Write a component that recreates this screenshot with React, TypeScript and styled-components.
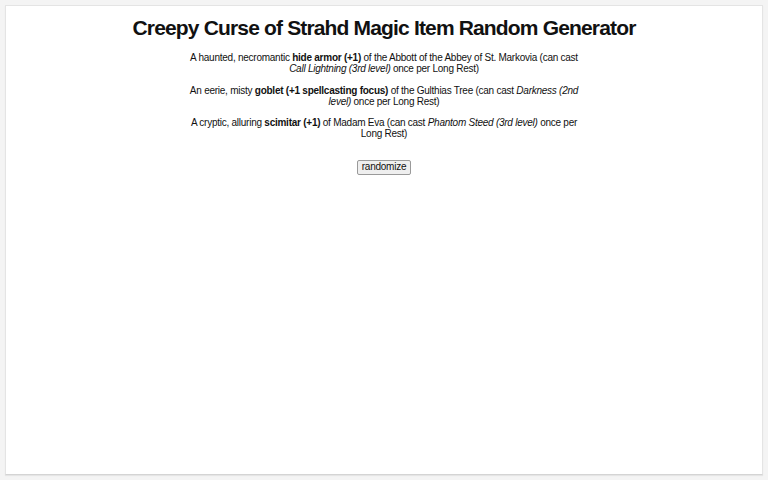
import { createGlobalStyle } from 'styled-components'
import styled from 'styled-components'

interface Item {
  adjectives: string
  article: string
  name: string
  owner: string
  spell: string
}

const ITEMS: Item[] = [
  {
    article: 'A',
    adjectives: 'haunted, necromantic',
    name: 'hide armor (+1)',
    owner: 'the Abbott of the Abbey of St. Markovia',
    spell: 'Call Lightning (3rd level)',
  },
  {
    article: 'An',
    adjectives: 'eerie, misty',
    name: 'goblet (+1 spellcasting focus)',
    owner: 'the Gulthias Tree',
    spell: 'Darkness (2nd level)',
  },
  {
    article: 'A',
    adjectives: 'cryptic, alluring',
    name: 'scimitar (+1)',
    owner: 'Madam Eva',
    spell: 'Phantom Steed (3rd level)',
  },
]

const GlobalStyle = createGlobalStyle`
  html, body {
    height: 100%;
  }

  body {
    margin: 0;
    padding: 5px;
    box-sizing: border-box;
    background: #f4f4f4;
    font-family: "Liberation Sans", Arial, sans-serif;
    color: #000;
  }

  #root {
    height: 100%;
  }
`

const App = () => {
  return (
    <>
      <GlobalStyle />
      <Card>
        <Title>Creepy Curse of Strahd Magic Item Random Generator</Title>
        <ItemList>
          {ITEMS.map((item) => (
            <ItemText key={item.name}>
              {item.article} {item.adjectives} <b>{item.name}</b> of {item.owner} (can cast{' '}
              <i>{item.spell}</i> once per Long Rest)
            </ItemText>
          ))}
        </ItemList>
        <ButtonRow>
          <RandomizeButton type="button">randomize</RandomizeButton>
        </ButtonRow>
      </Card>
    </>
  )
}

export default App

const Card = styled.div`
  height: 100%;
  box-sizing: border-box;
  background: #fff;
  border: 1px solid #e4e4e4;
  border-bottom-color: #d4d4d4;
  box-shadow: 0 1px 1px rgba(0, 0, 0, 0.06);
  padding-top: 10px;
  display: flex;
  flex-direction: column;
  align-items: center;
`

const Title = styled.h1`
  margin: 0;
  font-size: 21px;
  font-weight: bold;
  line-height: 24px;
  letter-spacing: -0.84px;
  color: #111;
`

const ItemList = styled.div`
  width: 400px;
  margin-top: 12px;
  display: flex;
  flex-direction: column;
  gap: 10.5px;
`

const ItemText = styled.p`
  margin: 0;
  font-size: 10px;
  line-height: 11px;
  letter-spacing: -0.25px;
  text-align: center;
  color: #111;
`

const ButtonRow = styled.div`
  margin-top: 17px;
`

const RandomizeButton = styled.button`
  font-family: "Liberation Sans", Arial, sans-serif;
  font-size: 10px;
  letter-spacing: -0.25px;
  line-height: 12px;
  padding: 0 4px;
  height: 15px;
  color: #111;
  background: #efefef;
  border: 1px solid #9a9a9a;
  border-radius: 2px;
`
